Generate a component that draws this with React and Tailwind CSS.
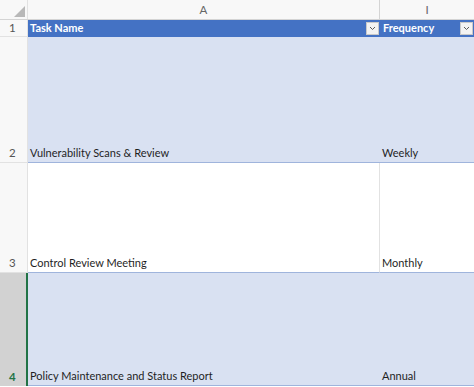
import React from 'react'

const rows = [
  { n: 2, task: 'Vulnerability Scans & Review', freq: 'Weekly', h: 'h-[126px]', band: true },
  { n: 3, task: 'Control Review Meeting', freq: 'Monthly', h: 'h-[110px]', band: false },
  { n: 4, task: 'Policy Maintenance and Status Report', freq: 'Annual', h: 'h-[113px]', band: true, selected: true },
]

const FilterButton = () => (
  <div className="w-[13px] h-[13px] bg-[#f3f3f3] border border-[#c9c9c9] flex items-center justify-center">
    <svg width="7" height="5" viewBox="0 0 7 5">
      <path d="M1 1 L3.5 3.5 L6 1" fill="none" stroke="#5a5a5a" strokeWidth="1" />
    </svg>
  </div>
)

const App = () => {
  return (
    <div className="w-[474px] h-[387px] overflow-hidden bg-white text-[11px] text-[#1f1f1f]" style={{ fontFamily: 'Lato, "Noto Sans", sans-serif' }}>
      {/* column headers */}
      <div className="flex h-[20px] bg-[#f8f8f8] border-b border-[#d4d4d4] text-[#666] text-[11.5px]">
        <div className="w-[28px] shrink-0 relative border-r border-[#e2e2e2]">
          <div className="absolute right-[2px] bottom-[2px] w-0 h-0 border-l-[11px] border-l-transparent border-b-[11px] border-b-[#b8b8b8]" />
        </div>
        <div className="w-[352px] shrink-0 flex items-center justify-center border-r border-[#d4d4d4]">A</div>
        <div className="flex-1 flex items-center justify-center">I</div>
      </div>

      {/* row 1 - table header */}
      <div className="flex h-[17px]">
        <div className="w-[28px] shrink-0 bg-[#f8f8f8] border-r border-b border-[#e2e2e2] flex items-center pl-[9px] text-[#555] text-[11.5px]">1</div>
        <div className="w-[352px] shrink-0 bg-[#4472c4] flex items-center justify-between pl-[2px] pr-[1px] text-white font-bold">
          <span>Task Name</span>
          <FilterButton />
        </div>
        <div className="flex-1 bg-[#4472c4] flex items-center justify-between pl-[2px] pr-[1px] text-white font-bold border-l border-[#4472c4]">
          <span>Frequency</span>
          <FilterButton />
        </div>
      </div>

      {rows.map((r) => (
        <div key={r.n} className={`flex ${r.h}`}>
          <div
            className={`w-[28px] shrink-0 flex items-end pb-[1px] pl-[9px] text-[11.5px] ${
              r.selected
                ? 'bg-[#d2d2d2] border-r-2 border-[#217346] text-[#217346] font-bold'
                : 'bg-[#f8f8f8] border-r border-b border-[#e2e2e2] text-[#555]'
            }`}
          >
            {r.n}
          </div>
          <div
            className={`w-[352px] shrink-0 flex items-end pb-[1px] pl-[2px] border-b ${
              r.band ? 'bg-[#d9e1f2] border-[#9fb4dc]' : 'bg-white border-[#9fb4dc] border-r border-r-[#e2e2e2]'
            }`}
          >
            {r.task}
          </div>
          <div
            className={`flex-1 flex items-end pb-[1px] pl-[2px] border-b ${
              r.band ? 'bg-[#d9e1f2] border-[#9fb4dc]' : 'bg-white border-[#9fb4dc]'
            }`}
          >
            {r.freq}
          </div>
        </div>
      ))}
    </div>
  )
}

export default App
